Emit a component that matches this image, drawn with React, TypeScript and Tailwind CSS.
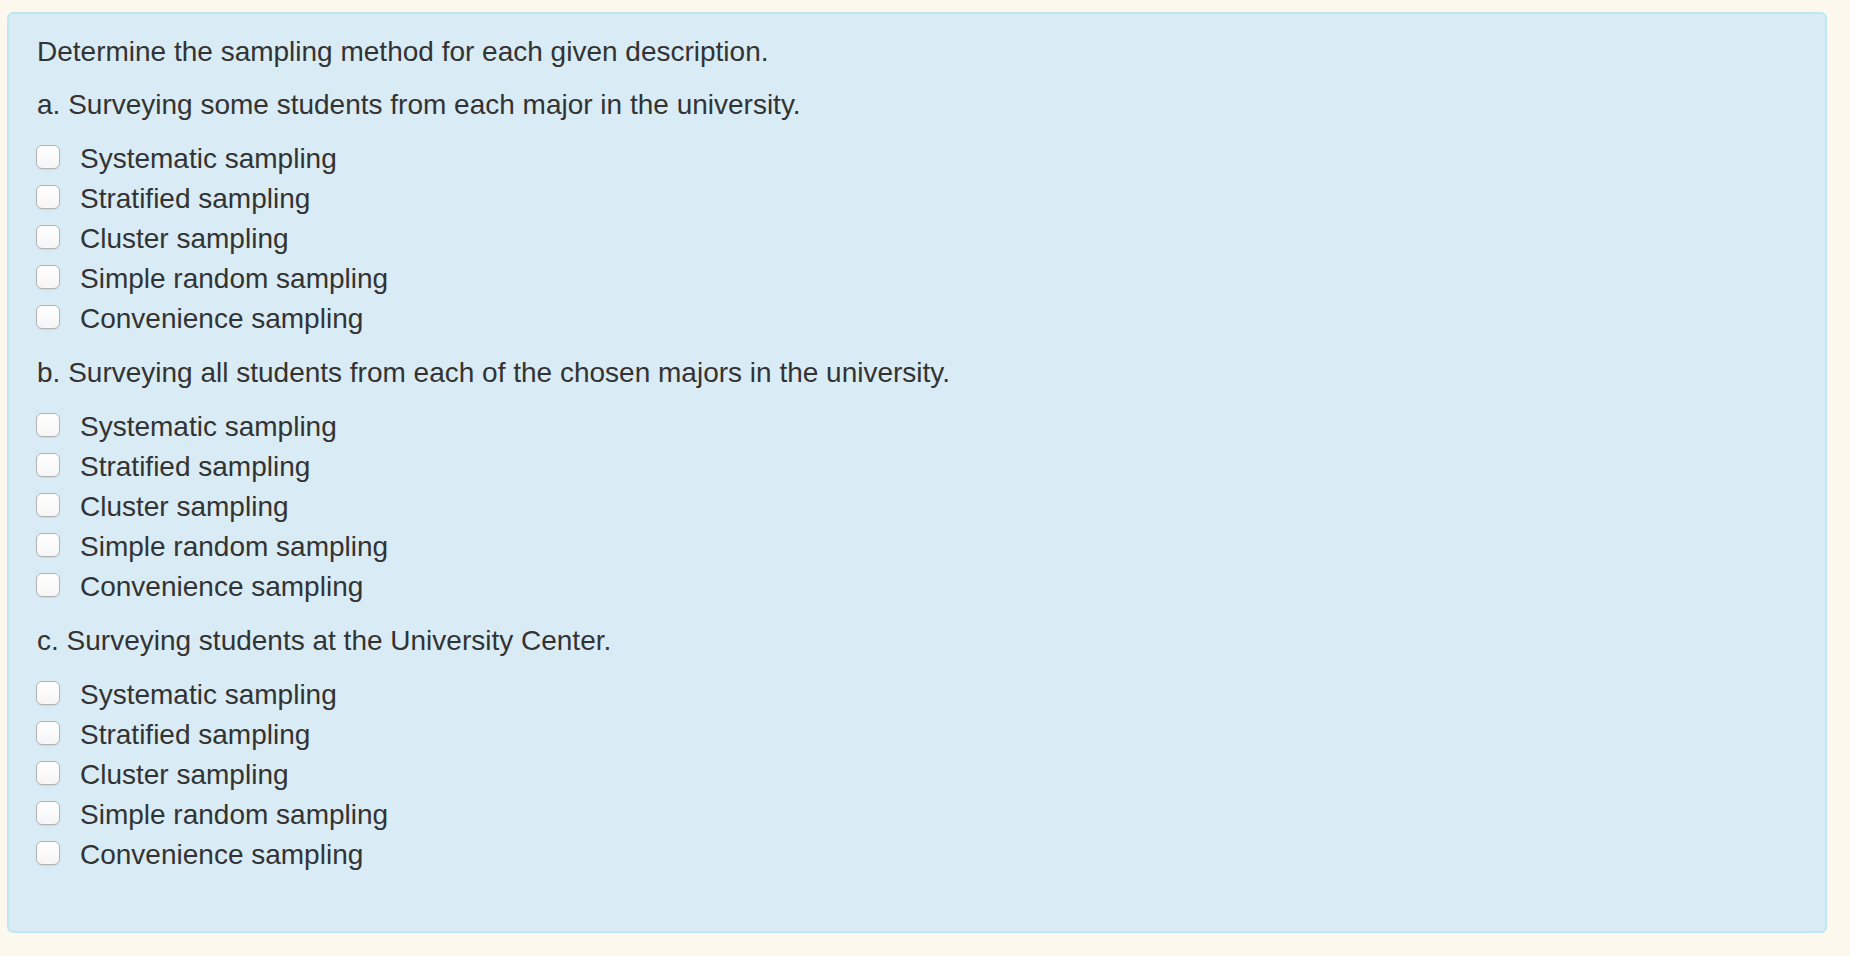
const options = [
  "Systematic sampling",
  "Stratified sampling",
  "Cluster sampling",
  "Simple random sampling",
  "Convenience sampling",
];

const questions = [
  "a. Surveying some students from each major in the university.",
  "b. Surveying all students from each of the chosen majors in the university.",
  "c. Surveying students at the University Center.",
];

const Option = ({ label }: { label: string }) => {
  return (
    <label className="flex flex-row items-center h-[40px]">
      <span className="block w-[24px] h-[24px] -ml-px mb-[4px] rounded-[6px] border border-[#b3b3b3] bg-gradient-to-b from-white to-[#f6f6f6] shadow-[0_1px_1px_rgba(0,0,0,0.08)]"></span>
      <span className="ml-[20px]">{label}</span>
    </label>
  );
};

const App = () => {
  return (
    <div
      className="min-h-[956px] bg-[#fdf8ee] pt-[12px] pl-[7px] pr-[23px] text-[28px] leading-[40px] text-[#333333]"
      style={{ fontFamily: '"Liberation Sans", Arial, sans-serif' }}
    >
      <div className="border-2 border-[#bde8f0] bg-[#d9ecf6] rounded-[6px] pt-[18px] pb-[56px] px-[28px]">
        <p className="mb-[13px]">
          Determine the sampling method for each given description.
        </p>

        {questions.map((q) => (
          <div key={q} className="mb-[14px] last:mb-0">
            <p className="mb-[14px]">{q}</p>
            <div className="flex flex-col">
              {options.map((o) => (
                <Option key={o} label={o} />
              ))}
            </div>
          </div>
        ))}
      </div>
    </div>
  );
};

export default App;
